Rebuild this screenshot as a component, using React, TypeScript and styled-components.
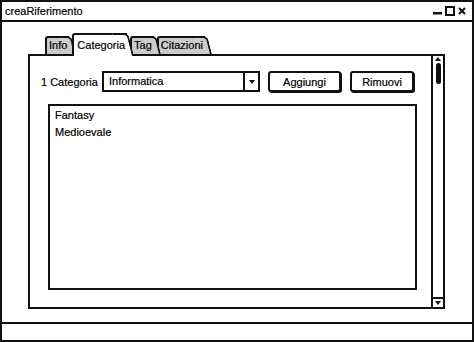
import React from "react";
import styled, { createGlobalStyle } from "styled-components";

const Global = createGlobalStyle`
  html, body { margin: 0; padding: 0; background: #fff; }
  body {
    font-family: "Liberation Sans", Arial, sans-serif;
    font-size: 11px;
    color: #000;
    -webkit-text-stroke: 0.2px #000;
  }
  * { box-sizing: border-box; }
`;

const Window = styled.div`
  width: 474px;
  height: 342px;
  border: 2px solid #111;
  display: flex;
  flex-direction: column;
  background: #fff;
`;

const TitleBar = styled.div`
  height: 20px;
  flex: none;
  border-bottom: 2px solid #111;
  display: flex;
  align-items: center;
  justify-content: space-between;
  padding: 0 4px 0 3px;
  font-size: 11px;
`;

const Controls = styled.div`
  display: flex;
  align-items: center;
  gap: 3px;
  padding-right: 2px;
`;

const Body = styled.div`
  flex: 1;
  display: flex;
  flex-direction: column;
  padding: 11px 27px 13px 26px;
  min-height: 0;
`;

const TabStrip = styled.div`
  position: relative;
  z-index: 1;
  display: flex;
  align-items: flex-end;
  height: 21px;
  padding-left: 17px;
`;

const Tab = styled.div<{ $active?: boolean; $z: number }>`
  position: relative;
  z-index: ${(p) => (p.$active ? 10 : p.$z)};
  height: ${(p) => (p.$active ? 23 : 18)}px;
  margin-bottom: ${(p) => (p.$active ? -2 : 0)}px;
  margin-right: -4px;
  padding: ${(p) => (p.$active ? "6px" : "3px")} 9px 0 ${(p) => (p.$active ? 5 : 4)}px;
  font-size: 11px;
  line-height: 13px;
  white-space: nowrap;
  &::before {
    content: "";
    position: absolute;
    left: 0;
    top: 0;
    bottom: 0;
    right: 7px;
    background: ${(p) => (p.$active ? "#fff" : "#cbcbcb")};
    border-left: 2px solid #111;
    border-top: 2px solid #111;
    border-top-left-radius: 3px;
    z-index: -1;
  }
  &::after {
    content: "";
    position: absolute;
    top: 0;
    bottom: 0;
    right: 0;
    width: 14px;
    background: ${(p) => (p.$active ? "#fff" : "#cbcbcb")};
    border-top: 2px solid #111;
    border-right: 2px solid #111;
    border-top-right-radius: 5px;
    transform: skewX(14deg);
    transform-origin: bottom right;
    z-index: -1;
  }
`;

const Panel = styled.div`
  flex: 1;
  display: flex;
  border: 2px solid #111;
  min-height: 0;
`;

const PanelContent = styled.div`
  flex: 1;
  min-width: 0;
  display: flex;
  flex-direction: column;
  gap: 12px;
  padding: 15px 14px 17px 11px;
`;

const Row = styled.div`
  display: flex;
  align-items: center;
  height: 21px;
  white-space: nowrap;
`;

const Label = styled.span`
  flex: none;
  width: 61px;
`;

const Combo = styled.div`
  flex: none;
  width: 158px;
  height: 21px;
  display: flex;
  border: 2px solid #111;
  background: #fff;
`;

const ComboText = styled.div`
  flex: 1;
  padding-left: 5px;
  line-height: 17px;
`;

const ComboButton = styled.div`
  width: 15px;
  border-left: 2px solid #111;
  display: flex;
  align-items: center;
  justify-content: center;
`;

const Button = styled.div<{ $w: number; $gap: number }>`
  flex: none;
  width: ${(p) => p.$w}px;
  height: 21px;
  margin-left: ${(p) => p.$gap}px;
  border: 2px solid #111;
  border-radius: 3px;
  box-shadow: 1px 1px 0 #111;
  display: flex;
  align-items: center;
  justify-content: center;
  background: #fff;
`;

const List = styled.div`
  flex: 1;
  margin-left: 7px;
  border: 2px solid #111;
  padding: 1px 5px;
`;

const ListItem = styled.div`
  line-height: 17px;
`;

const Scrollbar = styled.div`
  width: 12px;
  flex: none;
  border-left: 2px solid #111;
  display: flex;
  flex-direction: column;
  align-items: center;
`;

const ArrowBox = styled.div<{ $bottom?: boolean }>`
  width: 100%;
  height: ${(p) => (p.$bottom ? 10 : 6)}px;
  border-top: ${(p) => (p.$bottom ? "2px solid #111" : "none")};
  display: flex;
  align-items: center;
  justify-content: center;
  margin-top: ${(p) => (p.$bottom ? "auto" : "0")};
`;

const Thumb = styled.div`
  width: 5px;
  height: 21px;
  margin-top: 1px;
  background: #111;
  border-radius: 3px;
`;

const StatusBar = styled.div`
  height: 18px;
  flex: none;
  border-top: 2px solid #111;
`;

const Tri = ({ up }: { up?: boolean }) => (
  <svg width="6" height="4" viewBox="0 0 6 4">
    <polygon points={up ? "0,4 6,4 3,0" : "0,0 6,0 3,4"} fill="#111" />
  </svg>
);

export default function App() {
  const tabs = ["Info", "Categoria", "Tag", "Citazioni"];
  return (
    <>
      <Global />
      <Window>
        <TitleBar>
          <span>creaRiferimento</span>
          <Controls>
            <svg width="9" height="10" viewBox="0 0 9 10">
              <rect x="0" y="6" width="9" height="2.5" fill="#111" />
            </svg>
            <svg width="10" height="10" viewBox="0 0 10 10">
              <rect x="1" y="1" width="8" height="8" fill="none" stroke="#111" strokeWidth="2" />
            </svg>
            <svg width="8" height="10" viewBox="0 0 8 10">
              <path d="M1 2 L7 8 M7 2 L1 8" stroke="#111" strokeWidth="2" />
            </svg>
          </Controls>
        </TitleBar>
        <Body>
          <TabStrip>
            {tabs.map((t, i) => (
              <Tab key={t} $active={t === "Categoria"} $z={tabs.length - i}>
                {t}
              </Tab>
            ))}
          </TabStrip>
          <Panel>
            <PanelContent>
              <Row>
                <Label>1 Categoria</Label>
                <Combo>
                  <ComboText>Informatica</ComboText>
                  <ComboButton>
                    <Tri />
                  </ComboButton>
                </Combo>
                <Button $w={73} $gap={8}>Aggiungi</Button>
                <Button $w={64} $gap={9}>Rimuovi</Button>
              </Row>
              <List>
                <ListItem>Fantasy</ListItem>
                <ListItem>Medioevale</ListItem>
              </List>
            </PanelContent>
            <Scrollbar>
              <ArrowBox>
                <Tri up />
              </ArrowBox>
              <Thumb />
              <ArrowBox $bottom>
                <Tri />
              </ArrowBox>
            </Scrollbar>
          </Panel>
        </Body>
        <StatusBar />
      </Window>
    </>
  );
}
